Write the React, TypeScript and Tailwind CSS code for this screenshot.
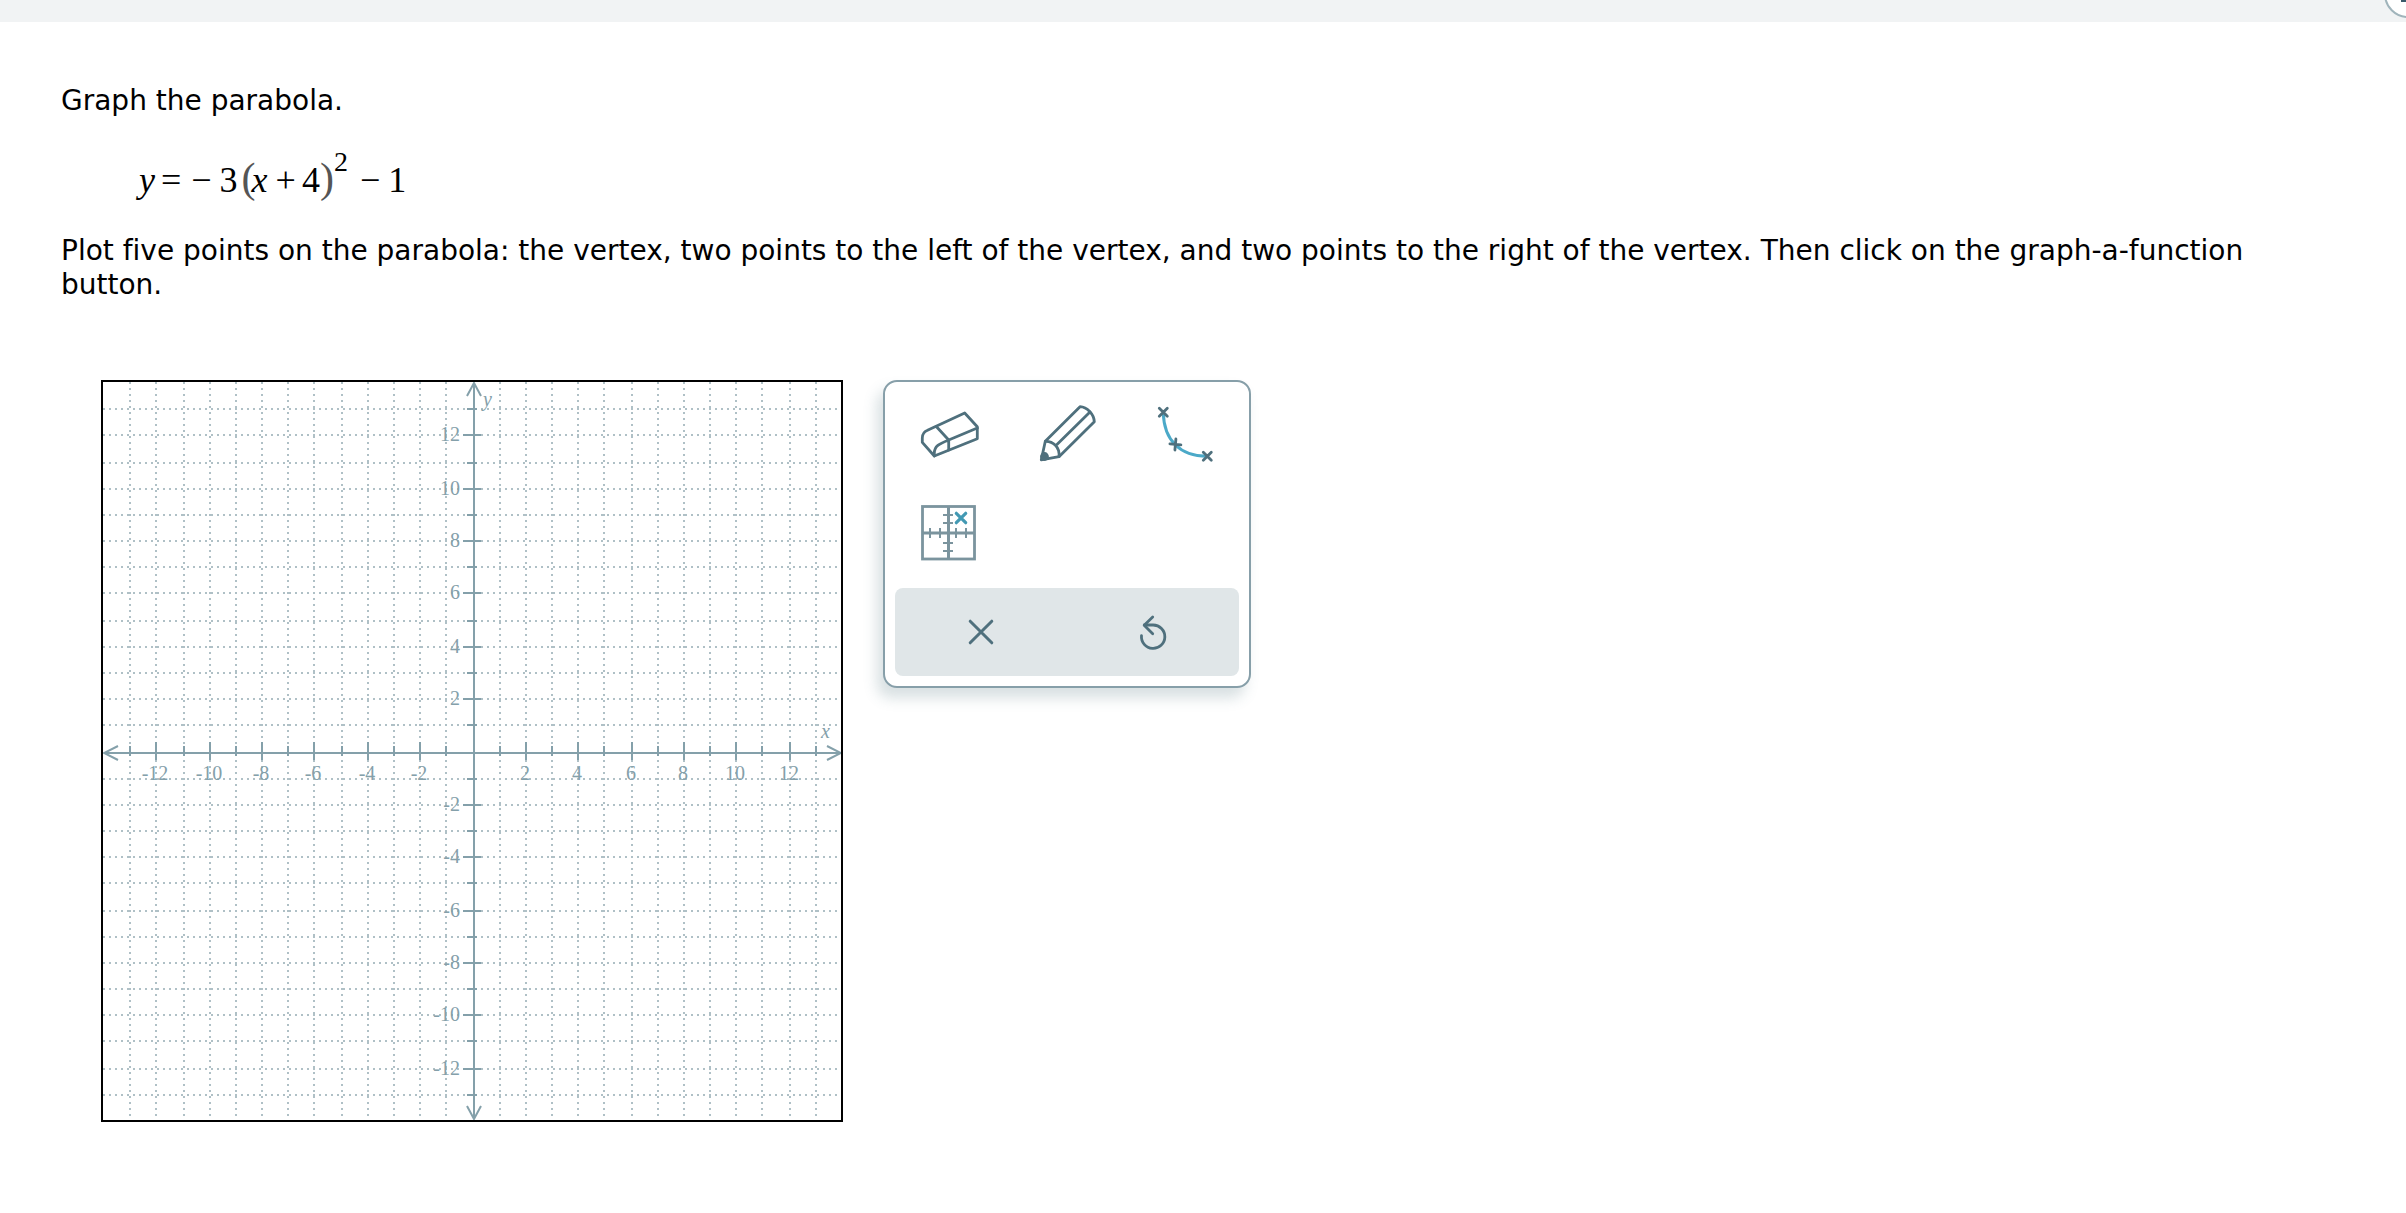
import type { ReactNode } from "react";

type ToolButtonProps = {
  label: string;
  children: ReactNode;
};

const GRAPH_SIZE = 738;
const CENTER = 371;
const RANGE = 13;

function linePosition(value: number) {
  const i = value + RANGE + 1;
  return 2 * (13 * i + 2 + Math.floor((i - 2.6) / 5.7)) - 1;
}

const values = Array.from({ length: RANGE * 2 + 1 }, (_, i) => i - RANGE).filter(
  (value) => value !== 0,
);

function Graph() {
  return (
    <svg
      viewBox={`0 0 ${GRAPH_SIZE} ${GRAPH_SIZE}`}
      className="block w-full"
      role="img"
      aria-label="Coordinate plane"
      fontFamily="'Liberation Serif', serif"
      fontSize="20"
      fill="#84a0aa"
    >
      <g stroke="#afc0c6" strokeWidth="2" strokeDasharray="2 4">
        {values.map((value) => {
          const p = linePosition(value);
          return <path key={value} d={`M${p} 0V${GRAPH_SIZE}M0 ${p}H${GRAPH_SIZE}`} />;
        })}
      </g>
      <g stroke="#84a0aa" strokeWidth="2" fill="none">
        <path d="M371 1V737M1 371H737" />
        <path d="M364 14L371 1L378 14M364 724L371 737L378 724" />
        <path d="M15 364L1 371L15 378M724 364L738 371L724 378" />
        {values.map((value) => {
          const p = linePosition(value);
          const start = value % 2 === 0 ? 360 : 364;
          const end = value % 2 === 0 ? 378 : 374;
          return <path key={value} d={`M${p} ${start}V${end}M${start} ${p}H${end}`} />;
        })}
      </g>
      {values
        .filter((value) => value % 2 === 0)
        .map((value) => (
          <g key={value}>
            <text x={linePosition(value) - 1} y={CENTER + 27} textAnchor="middle">
              {value}
            </text>
            <text x="357" y={linePosition(-value) + 6} textAnchor="end">
              {value}
            </text>
          </g>
        ))}
      <text x="380" y="24" fontStyle="italic">
        y
      </text>
      <text x="718" y="356" fontStyle="italic">
        x
      </text>
    </svg>
  );
}

function ToolButton({ label, children }: ToolButtonProps) {
  return (
    <button aria-label={label} className="flex h-[98px] items-center justify-center">
      <svg
        viewBox="0 0 60 60"
        className="h-[60px] w-[60px]"
        fill="none"
        stroke="#4f707d"
        strokeWidth="2.8"
        strokeLinejoin="round"
        strokeLinecap="round"
      >
        {children}
      </svg>
    </button>
  );
}

function Toolbox() {
  return (
    <div className="w-[368px] rounded-[14px] border-2 border-[#879fa9] bg-white pt-1 pb-[10px] shadow-[-6px_10px_14px_rgba(79,112,125,0.22)]">
      <div className="mx-[5px] grid grid-cols-3">
        <ToolButton label="Eraser">
          <path d="M45.7 8L58.3 21.7V33.7L15.3 51L3.3 37.3V33C3.3 29 5 26.6 8.5 25.2Z" />
          <path d="M17.5 21.7L29.7 35V45M29.7 35L58.3 23M15.3 51V48.5C15.3 41 20 39 29.7 35" />
        </ToolButton>
        <ToolButton label="Pencil">
          <path d="M43 1.7C50 2 57 9 57.3 16.7L22 51.7L4.3 54.8L8.3 36.3Z" />
          <path d="M19.7 39.7L53 7M8.3 36.3C16 36 23 42 22 51.7" />
          <circle cx="7.5" cy="51.5" r="3" fill="#4f707d" />
        </ToolButton>
        <ToolButton label="Graph a function">
          <path d="M8.3 8C9 35 25 51.3 52 51.3" stroke="#4ba9c8" strokeWidth="3" />
          <path d="M4.3 3.3L12.3 11.3M12.3 3.3L4.3 11.3" />
          <path d="M14.9 38.8L25.9 39.8M20.9 34L19.9 45" />
          <path d="M48.3 47.3L56.3 55.3M56.3 47.3L48.3 55.3" />
        </ToolButton>
        <ToolButton label="Plot a point">
          <g stroke="#7b949e" strokeLinecap="butt" strokeLinejoin="miter">
            <rect x="3.5" y="3.5" width="52" height="52.5" />
            <path d="M29.5 3V56M3 30H56" strokeWidth="3" />
            <path
              d="M11 25V35M21 25V35M37 25V35M47 25V35M24 12H34M24 20H34M24 40H34M24 48H34"
              strokeWidth="2"
            />
          </g>
          <path d="M37.3 10.3L46.7 19.7M46.7 10.3L37.3 19.7" stroke="#4299b3" strokeWidth="3.2" />
        </ToolButton>
      </div>
      <div className="mx-[10px] mt-1.5 grid h-[88px] grid-cols-2 rounded-lg bg-[#e0e6e8]">
        <button aria-label="Clear" className="flex items-center justify-center">
          <svg viewBox="0 0 40 40" className="h-10 w-10" stroke="#4f707d" strokeWidth="3" strokeLinecap="round">
            <path d="M9.2 9.2L30.8 30.8M30.8 9.2L9.2 30.8" />
          </svg>
        </button>
        <button aria-label="Undo" className="flex items-center justify-center">
          <svg
            viewBox="0 0 40 40"
            className="h-10 w-10"
            fill="none"
            stroke="#4f707d"
            strokeWidth="2.8"
            strokeLinecap="round"
            strokeLinejoin="round"
          >
            <path d="M8.5 23.6A11.7 11.7 0 1 0 20 13H11.3" />
            <path d="M19.7 5L11.2 13.3L19.7 21.7" />
          </svg>
        </button>
      </div>
    </div>
  );
}

function Equation() {
  return (
    <div className="ml-[78px] flex h-12 items-baseline font-['Liberation_Serif',serif] text-[36px] leading-[48px]">
      <i>y</i>
      <span className="ml-1.5">=</span>
      <span className="ml-2.5">−</span>
      <span className="ml-2">3</span>
      <span className="-mr-1 ml-1 text-[42px] text-[#555555]">(</span>
      <i>x</i>
      <span className="ml-2">+</span>
      <span className="ml-1.5">4</span>
      <span className="text-[42px] text-[#555555]">)</span>
      <sup className="top-0 -mt-2 self-start text-[28px] leading-8">2</sup>
      <span className="ml-3">−</span>
      <span className="ml-2">1</span>
    </div>
  );
}

function App() {
  return (
    <div className="relative overflow-hidden bg-white font-['DejaVu_Sans',sans-serif] text-[28px] leading-[34px] text-black [font-variant-ligatures:none]">
      <header className="h-[22px] bg-[#f1f3f4]"></header>
      <button
        aria-label="Help"
        className="absolute -top-[30px] -right-[26px] flex h-12 w-12 items-end justify-center rounded-full border-2 border-[#a0b4bb] bg-white"
      >
        <span className="mb-[14px] h-3 w-[14px] bg-[#3a5a6b]"></span>
      </button>
      <main className="px-[61px] pt-[62px] pb-[90px]">
        <p>Graph the parabola.</p>
        <div className="mt-9">
          <Equation />
        </div>
        <p className="mt-8">
          Plot five points on the parabola: the vertex, two points to the left of the vertex, and two
          points to the right of the vertex. Then click on the graph-a-function button.
        </p>
        <div className="mt-[78px] ml-10 flex items-start gap-10">
          <div className="w-[742px] border-2 border-black">
            <Graph />
          </div>
          <Toolbox />
        </div>
      </main>
    </div>
  );
}

export default App;
